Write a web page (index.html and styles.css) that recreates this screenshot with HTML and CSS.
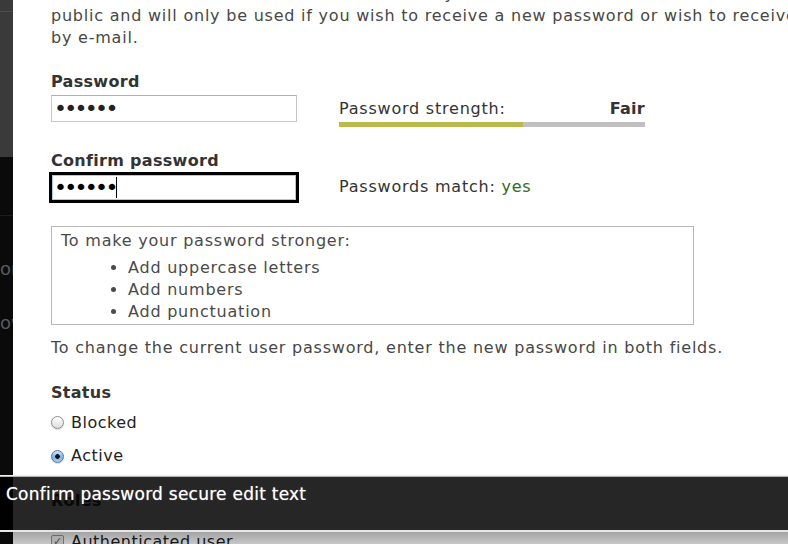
FILE: index.html
```html
<!DOCTYPE html>
<html lang="en">
<head>
<meta charset="utf-8">
<title>Edit account</title>
<link rel="stylesheet" href="styles.css">
</head>
<body>
<div class="page">
  <aside class="sidebar">
    <div class="sb-top"></div>
    <div class="sb-rest">
      <div class="sb-item">or</div>
      <div class="sb-item">ow</div>
    </div>
  </aside>
  <main class="main">
    <p class="desc">A valid e-mail address. All e-mails from the system will be sent to this address. The e-mail address is not made<br>public and will only be used if you wish to receive a new password or wish to receive certain news or notifications<br>by e-mail.</p>

    <div class="field field-pass">
      <label class="label" for="pass1">Password</label>
      <div class="field-row">
        <input type="password" id="pass1" class="text-input" value="secret">
        <div class="strength">
          <div class="strength-text"><span>Password strength:</span><span class="strength-value">Fair</span></div>
          <div class="strength-bar"><div class="strength-fill" style="width:60%"></div></div>
        </div>
      </div>
    </div>

    <div class="field field-confirm">
      <label class="label" for="pass2">Confirm password</label>
      <div class="field-row">
        <div class="input-wrap">
          <input type="password" id="pass2" class="text-input is-focused" value="secret">
          <span class="caret"></span>
        </div>
        <div class="match">Passwords match: <span class="match-value">yes</span></div>
      </div>
    </div>

    <div class="suggestions">
      <p>To make your password stronger:</p>
      <ul>
        <li>Add uppercase letters</li>
        <li>Add numbers</li>
        <li>Add punctuation</li>
      </ul>
    </div>

    <p class="help">To change the current user password, enter the new password in both fields.</p>

    <div class="label status-title">Status</div>
    <label class="radio-row"><input type="radio" name="status" class="radio"> Blocked</label>
    <label class="radio-row radio-second"><input type="radio" name="status" class="radio" checked> Active</label>

    <div class="label roles-title">Roles</div>
    <label class="radio-row check-row"><span class="checkbox">&#10003;</span> Authenticated user</label>
  </main>

  <div class="speech">
    <div class="speech-bar">Confirm password secure edit text</div>
    <div class="speech-fade"></div>
  </div>
</div>
</body>
</html>
```

FILE: styles.css
```css
body {
  margin: 0;
  background: #fff;
  font-family: "DejaVu Sans", Verdana, sans-serif;
}

.page {
  position: relative;
  display: flex;
  width: 788px;
  height: 544px;
  overflow: hidden;
}

/* dark strip on the left */
.sidebar {
  width: 13px;
  flex: none;
  display: flex;
  flex-direction: column;
  overflow: hidden;
}

.sb-top {
  height: 157px;
  background: linear-gradient(#3a3a3a 0 11px, #4e4e4e 11px 12px, #3a3a3a 12px);
}

.sb-rest {
  flex: 1;
  background: linear-gradient(#0a0a0a 0 58px, #1d1d1d 58px 59px, #0a0a0a 59px);
  padding-top: 101px;
  display: flex;
  flex-direction: column;
  gap: 32px;
}

.sb-item {
  font-size: 18px;
  line-height: 22px;
  color: #5a5a5a;
  white-space: nowrap;
}

/* main form */
.main {
  flex: 1;
  min-width: 0;
  margin-top: -17px;
  padding-left: 38px;
  overflow: hidden;
  font-size: 16px;
  line-height: 22px;
  letter-spacing: 0.78px;
  color: #474747;
}

.desc {
  margin: 0;
  white-space: nowrap;
}

.label {
  display: block;
  font-weight: bold;
  letter-spacing: 0.3px;
  color: #333;
  margin-bottom: 2px;
}

.field-pass { margin-top: 21.5px; }
.field-confirm { margin-top: 23px; }

.field-row {
  display: flex;
  align-items: flex-start;
  gap: 42px;
}

.text-input {
  display: block;
  width: 246px;
  height: 27px;
  box-sizing: border-box;
  margin: 0;
  padding: 0 2px;
  border: 1px solid #c8c8c8;
  border-top-color: #b0b0b0;
  background: #fff;
  font-family: "DejaVu Sans", Verdana, sans-serif;
  font-size: 22px;
  letter-spacing: -2.7px;
  color: #222;
  outline: none;
}

.input-wrap {
  position: relative;
}

.text-input.is-focused {
  border-color: #000;
  color: #000;
  box-shadow: 0 0 0 2px #000, inset 0 0 0 1px #a8c9ee;
}

.caret {
  position: absolute;
  left: 65px;
  top: 3px;
  width: 1px;
  height: 21px;
  background: #000;
}

.strength {
  width: 306px;
  margin-top: 3.5px;
}

.strength-text {
  display: flex;
  justify-content: space-between;
  color: #333;
}

.strength-value {
  font-weight: bold;
  letter-spacing: 0.3px;
}

.strength-bar {
  margin-top: 1.5px;
  height: 5px;
  background: #c0c0c0;
}

.strength-fill {
  height: 100%;
  background: #bbb94b;
}

.match {
  margin-top: 2.5px;
  color: #333;
}

.match-value {
  color: #356a1f;
}

.suggestions {
  margin-top: 25px;
  width: 643px;
  box-sizing: border-box;
  border: 1px solid #b8b8b8;
  padding: 3px 9px 1px;
  color: #4a4a4a;
}

.suggestions p {
  margin: 0;
}

.suggestions ul {
  margin: 5px 0 0;
  padding-left: 67px;
}

.help {
  margin: 12px 0 0;
  white-space: nowrap;
}

.status-title {
  margin-top: 23px;
  margin-bottom: 0;
}

.radio-row {
  display: flex;
  align-items: center;
  gap: 7px;
  margin-top: 8px;
  color: #222;
  letter-spacing: 0.5px;
}

.radio-second {
  margin-top: 11.5px;
}

.radio {
  -webkit-appearance: none;
  appearance: none;
  width: 13px;
  height: 13px;
  margin: 0;
  flex: none;
  border-radius: 50%;
  border: 1px solid #8d8d8d;
  box-sizing: border-box;
  background: linear-gradient(#ffffff, #dcdcdc);
  box-shadow: 0 1px 1px rgba(0, 0, 0, 0.15);
}

.radio:checked {
  border-color: #4f77a8;
  background:
    radial-gradient(circle, #111 0 2px, transparent 2.6px),
    linear-gradient(#d2e6fa, #7eaee4 55%, #a9cdf2);
}

.roles-title {
  margin-top: 22.8px;
}

.check-row {
  margin-top: 19px;
}

.checkbox {
  width: 13px;
  height: 13px;
  flex: none;
  box-sizing: border-box;
  border: 1px solid #9a9a9a;
  border-radius: 2px;
  background: linear-gradient(#fafafa, #dedede);
  font-size: 11px;
  line-height: 11px;
  text-align: center;
  color: #666;
  letter-spacing: 0;
}

/* VoiceOver caption bar over the page */
.speech {
  position: absolute;
  left: 0;
  top: 475px;
  width: 788px;
}

.speech-bar {
  box-sizing: border-box;
  height: 57px;
  padding-top: 7px;
  padding-left: 6px;
  border-top: 1px solid #efefef;
  border-bottom: 2px solid #e6e6e6;
  box-shadow: inset 0 1px 0 #b5b5b5;
  background: rgba(0, 0, 0, 0.85);
  font-size: 17px;
  line-height: 22px;
  letter-spacing: 0.25px;
  color: #fff;
  text-shadow: 0 0 1px rgba(255, 255, 255, 0.6);
}

.speech-fade {
  height: 12px;
  background: linear-gradient(rgba(0, 0, 0, 0.36), rgba(0, 0, 0, 0.22));
}
```
